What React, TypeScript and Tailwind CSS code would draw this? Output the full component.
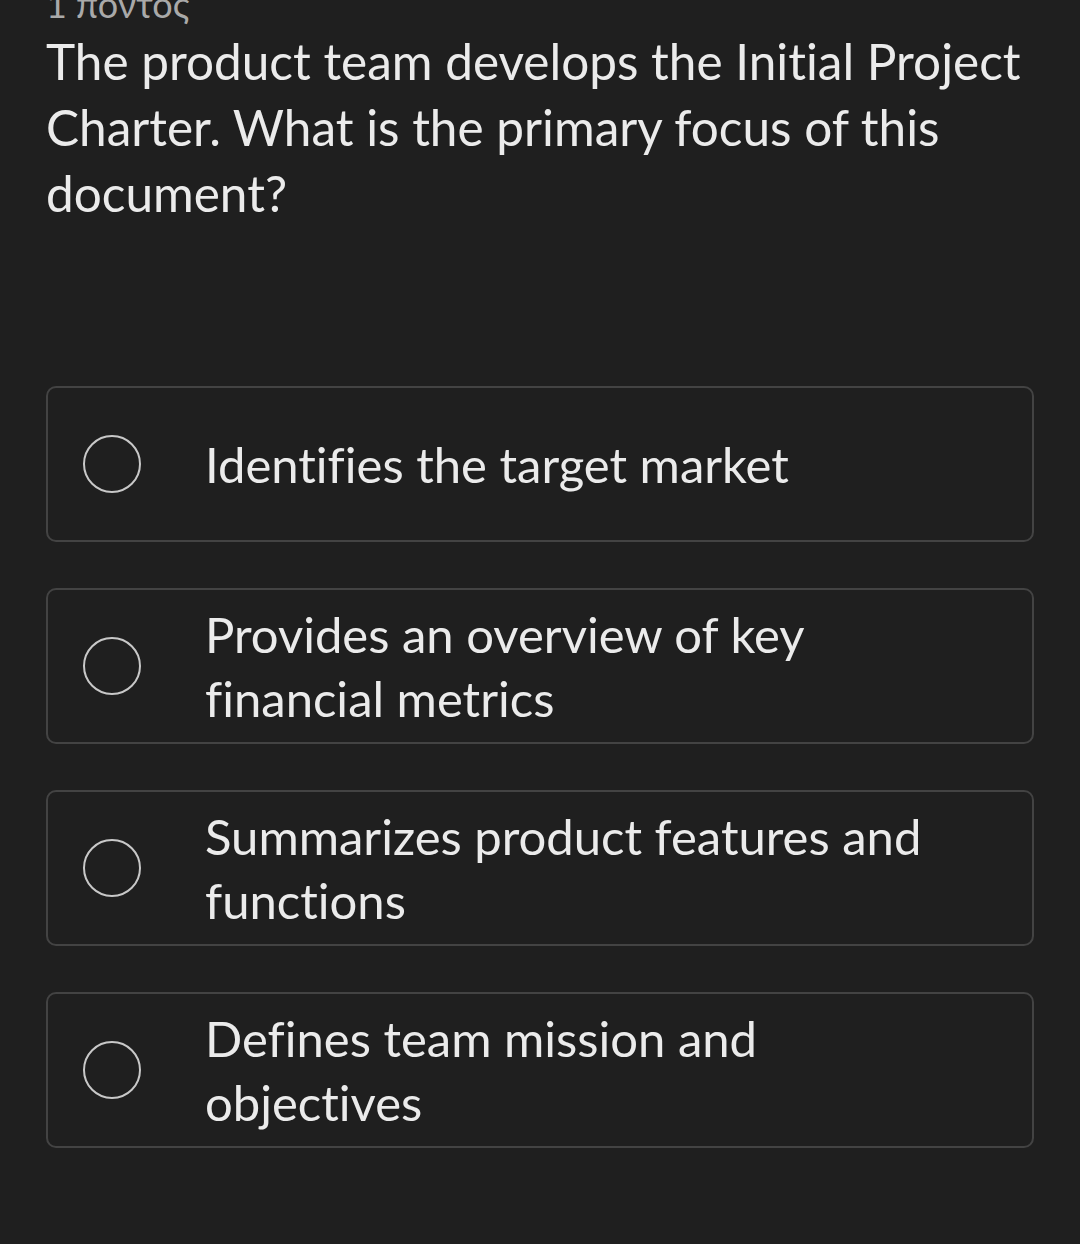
const options = [
  'Identifies the target market',
  'Provides an overview of key financial metrics',
  'Summarizes product features and functions',
  'Defines team mission and objectives',
];

function OptionRow({ label }: { label: string }) {
  return (
    <div className="flex h-[156px] items-center rounded-[10px] border-2 border-[#434343] pl-[35px]">
      <div className="h-[58px] w-[58px] shrink-0 rounded-full border-2 border-[#c8c8c8]" />
      <div className="ml-[64px] max-w-[748px] text-[49px] leading-[64px] text-[#ebebeb]">{label}</div>
    </div>
  );
}

export default function App() {
  return (
    <div
      className="min-h-[1244px] w-full overflow-hidden bg-[#1f1f1f] px-[46px] [font-variant-ligatures:none]"
      style={{ fontFamily: 'Lato, "Noto Sans", sans-serif' }}
    >
      <div className="-mt-[18px] text-[36px] leading-[44px] text-[#a9a9a9]">1 πόντος</div>
      <div className="mt-[2px] text-[49.5px] leading-[66px] text-[#ebebeb]">
        The product team develops the Initial Project Charter. What is the primary focus of this document?
      </div>
      <div className="mt-[160px] flex flex-col gap-[46px]">
        {options.map((o) => (
          <OptionRow key={o} label={o} />
        ))}
      </div>
    </div>
  );
}
